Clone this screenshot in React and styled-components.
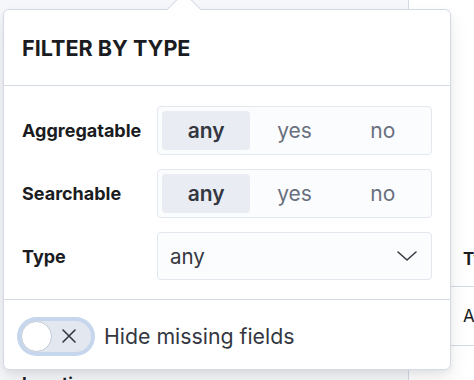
import React, { useState } from "react";
import styled, { createGlobalStyle } from "styled-components";

const GlobalStyle = createGlobalStyle`
  html, body {
    margin: 0;
    padding: 0;
    background: #ffffff;
    font-family: Inter, "Liberation Sans", sans-serif;
    -webkit-font-smoothing: antialiased;
  }
`;

const Page = styled.div`
  position: relative;
  display: flex;
  width: 474px;
  height: 380px;
  overflow: hidden;
`;

const Sidebar = styled.div`
  width: 409px;
  flex-shrink: 0;
  background: #f5f7fa;
  border-right: 1px solid #d3dae6;
  padding: 374px 0 0 22px;
  box-sizing: border-box;
`;

const SidebarItem = styled.div`
  font-size: 17px;
  font-weight: 700;
  color: #1a1c21;
`;

const Main = styled.div`
  flex: 1;
  padding-top: 232px;
`;

const TableRow = styled.div`
  display: flex;
  align-items: center;
  height: ${(p) => (p.$head ? "54px" : "58px")};
  border-bottom: 1px solid #d3dae6;
  padding-left: 54px;
  font-size: 17px;
  font-weight: ${(p) => (p.$head ? 700 : 400)};
  color: #1a1c21;
  white-space: nowrap;
`;

const Popover = styled.div`
  position: absolute;
  top: 9px;
  left: 3px;
  width: 448px;
  height: 361px;
  box-sizing: border-box;
  background: #fff;
  border: 1px solid #d3dae6;
  border-radius: 6px;
  box-shadow: 0 10px 20px rgba(0, 0, 0, 0.08), 0 3px 6px rgba(0, 0, 0, 0.05);
  display: flex;
  flex-direction: column;
`;

const Arrow = styled.div`
  position: absolute;
  top: -13px;
  left: 168px;
  width: 23px;
  height: 23px;
  background: #fff;
  border-top: 1px solid #d3dae6;
  border-left: 1px solid #d3dae6;
  transform: rotate(45deg);
`;

const Header = styled.div`
  height: 75px;
  display: flex;
  align-items: center;
  padding: 0 18px;
  border-bottom: 1px solid #d3dae6;
  flex-shrink: 0;
`;

const Title = styled.h2`
  margin: 0;
  font-size: 21.6px;
  font-weight: 700;
  color: #1a1c21;
`;

const Body = styled.div`
  display: flex;
  flex-direction: column;
  gap: 14px;
  padding: 20px 18px 19px 18px;
  border-bottom: 1px solid #d3dae6;
`;

const Row = styled.div`
  display: grid;
  grid-template-columns: 135px 275px;
  align-items: center;
`;

const Label = styled.label`
  font-size: 18px;
  font-weight: 700;
  color: #1a1c21;
`;

const ButtonGroup = styled.div`
  display: grid;
  grid-template-columns: repeat(3, 1fr);
  height: 49px;
  padding: 4px;
  box-sizing: border-box;
  background: #fbfcfd;
  border: 1px solid #e3e8ef;
  border-radius: 4px;
`;

const Segment = styled.button`
  border: none;
  border-radius: 4px;
  background: ${(p) => (p.$active ? "#e9edf3" : "transparent")};
  font-family: inherit;
  font-size: 21px;
  font-weight: ${(p) => (p.$active ? 600 : 400)};
  color: ${(p) => (p.$active ? "#343741" : "#69707d")};
  cursor: pointer;
  padding: 0;
`;

const Select = styled.div`
  display: flex;
  align-items: center;
  justify-content: space-between;
  height: 48px;
  box-sizing: border-box;
  padding: 0 14px 0 12px;
  background: #fbfcfd;
  border: 1px solid #e3e8ef;
  border-radius: 4px;
  font-size: 20.5px;
  color: #343741;
`;

const Footer = styled.div`
  flex: 1;
  display: flex;
  align-items: center;
  gap: 13px;
  padding: 3px 17px 0;
`;

const Toggle = styled.button`
  position: relative;
  flex-shrink: 0;
  width: 70px;
  height: 31px;
  border: none;
  border-radius: 16px;
  background: #e3e8f0;
  box-shadow: 0 0 0 4px #c6d6ec;
  padding: 0 14px 0 0;
  cursor: pointer;
  display: flex;
  align-items: center;
  justify-content: flex-end;
`;

const Thumb = styled.span`
  position: absolute;
  top: 0;
  left: ${(p) => (p.$on ? "39px" : "0")};
  width: 31px;
  height: 31px;
  box-sizing: border-box;
  border-radius: 50%;
  background: #fff;
  border: 1px solid #c2cad6;
`;

const ToggleText = styled.span`
  font-size: 21.3px;
  color: #343741;
`;

const Cross = () => (
  <svg width="16" height="16" viewBox="0 0 16 16" fill="none">
    <path d="M2 2L14 14M14 2L2 14" stroke="#343741" strokeWidth="1.6" strokeLinecap="round" />
  </svg>
);

const Chevron = () => (
  <svg width="20" height="10" viewBox="0 0 20 10" fill="none">
    <path d="M1 1L10 9L19 1" stroke="#343741" strokeWidth="1.5" strokeLinecap="round" strokeLinejoin="round" />
  </svg>
);

const options = ["any", "yes", "no"];

const Segmented = ({ value, onChange }) => (
  <ButtonGroup>
    {options.map((o) => (
      <Segment key={o} $active={value === o} onClick={() => onChange(o)}>
        {o}
      </Segment>
    ))}
  </ButtonGroup>
);

export default function App() {
  const [aggregatable, setAggregatable] = useState("any");
  const [searchable, setSearchable] = useState("any");
  const [hideMissing, setHideMissing] = useState(false);

  return (
    <>
      <GlobalStyle />
      <Page>
        <Sidebar>
          <SidebarItem>Location</SidebarItem>
        </Sidebar>
        <Main>
          <TableRow $head>Type</TableRow>
          <TableRow>Agg</TableRow>
        </Main>

        <Popover>
          <Arrow />
          <Header>
            <Title>FILTER BY TYPE</Title>
          </Header>
          <Body>
            <Row>
              <Label>Aggregatable</Label>
              <Segmented value={aggregatable} onChange={setAggregatable} />
            </Row>
            <Row>
              <Label>Searchable</Label>
              <Segmented value={searchable} onChange={setSearchable} />
            </Row>
            <Row>
              <Label>Type</Label>
              <Select>
                <span>any</span>
                <Chevron />
              </Select>
            </Row>
          </Body>
          <Footer>
            <Toggle onClick={() => setHideMissing(!hideMissing)}>
              <Thumb $on={hideMissing} />
              <Cross />
            </Toggle>
            <ToggleText>Hide missing fields</ToggleText>
          </Footer>
        </Popover>
      </Page>
    </>
  );
}
